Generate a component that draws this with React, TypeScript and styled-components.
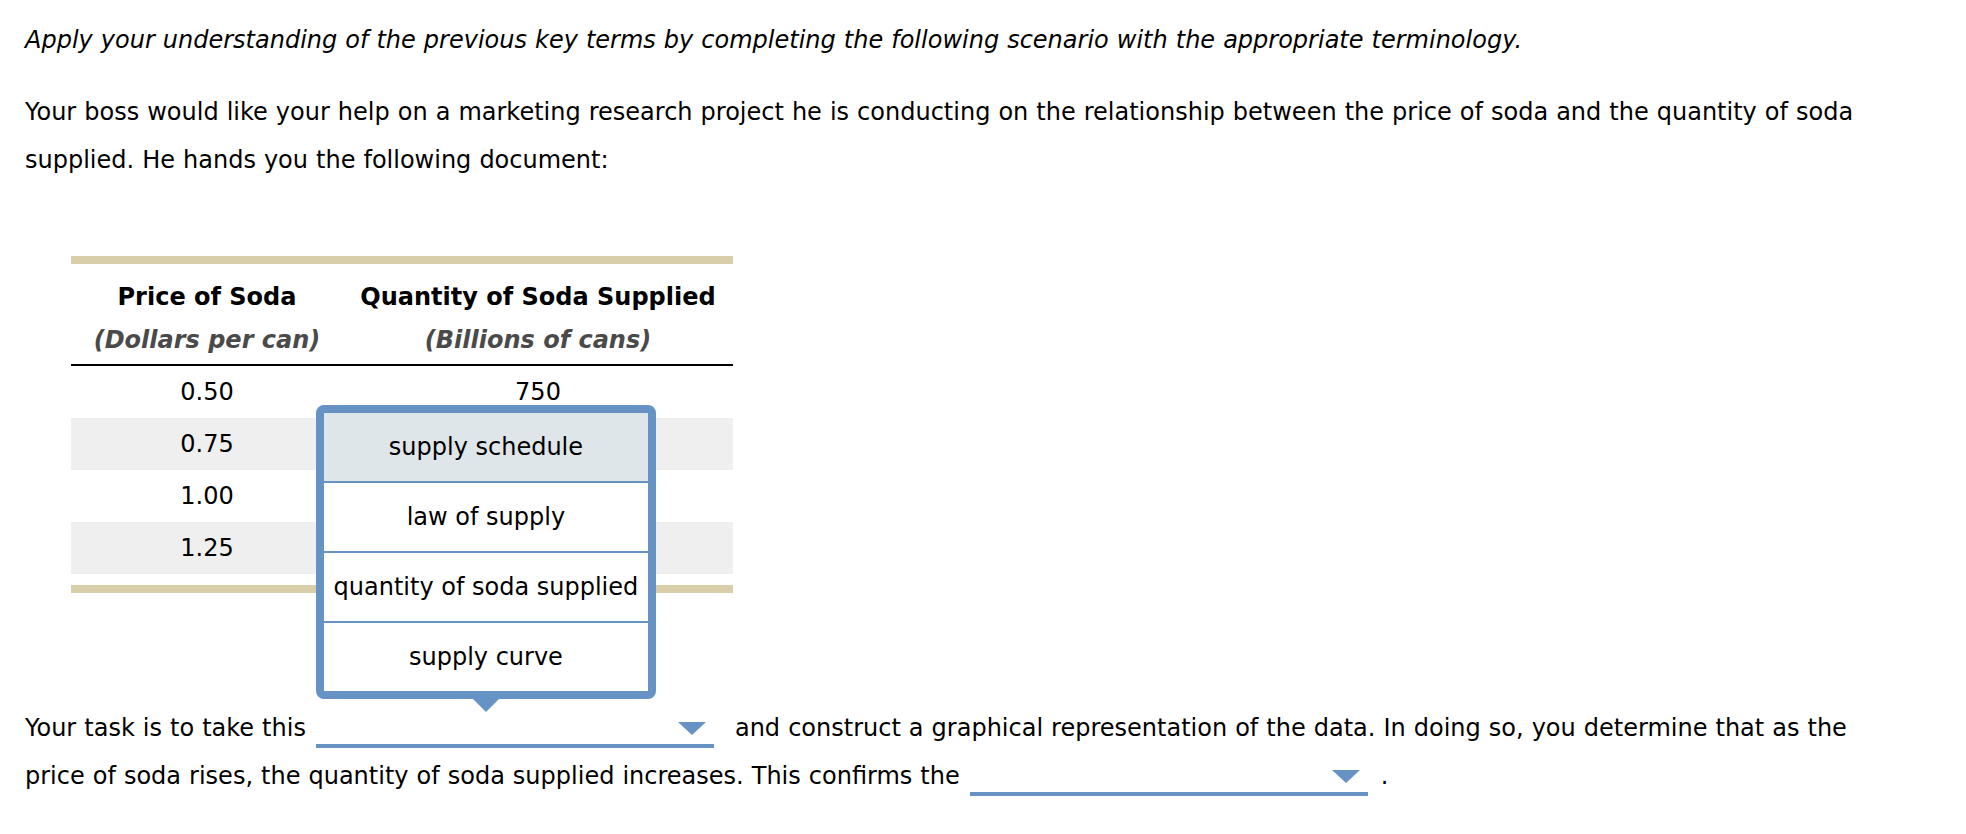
import { ReactNode } from 'react';
import styled, { createGlobalStyle } from 'styled-components';

const BLUE = '#6693c3';
const TAN = '#d8cea9';

const GlobalStyle = createGlobalStyle`
  body {
    margin: 0;
    background: #fff;
    color: #000;
    font-family: Verdana, 'DejaVu Sans', sans-serif;
  }
`;

interface Row {
  price: string;
  quantity: string;
}

const rows: Row[] = [
  { price: '0.50', quantity: '750' },
  { price: '0.75', quantity: '' },
  { price: '1.00', quantity: '' },
  { price: '1.25', quantity: '' },
];

const options = ['supply schedule', 'law of supply', 'quantity of soda supplied', 'supply curve'];

const Arrow = () => (
  <ArrowIcon width="28" height="13" viewBox="0 0 28 13">
    <polygon points="0,0 28,0 14,13" fill={BLUE} />
  </ArrowIcon>
);

const Select = (props: { children?: ReactNode }) => {
  const { children } = props;
  return (
    <SelectBox>
      <Arrow />
      {children}
    </SelectBox>
  );
};

const App = () => {
  return (
    <Page>
      <GlobalStyle />
      <Intro>
        Apply your understanding of the previous key terms by completing the following scenario with the appropriate
        terminology.
      </Intro>
      <Text $gap={24}>
        Your boss would like your help on a marketing research project he is conducting on the relationship between the
        price of soda and the quantity of soda
        <br />
        supplied. He hands you the following document:
      </Text>

      <TableFrame>
        <DataTable>
          <thead>
            <tr>
              <HeadCell $w={272}>
                Price of Soda
                <SubHead>(Dollars per can)</SubHead>
              </HeadCell>
              <HeadCell $w={390}>
                Quantity of Soda Supplied
                <SubHead>(Billions of cans)</SubHead>
              </HeadCell>
            </tr>
          </thead>
          <tbody>
            {rows.map((row, idx) => (
              <BodyRow key={row.price} $shaded={idx % 2 === 1}>
                <Cell>{row.price}</Cell>
                <Cell>{row.quantity}</Cell>
              </BodyRow>
            ))}
          </tbody>
        </DataTable>
      </TableFrame>

      <Text $gap={111}>
        Your task is to take this{' '}
        <Select>
          <Popup>
            {options.map((opt, idx) => (
              <Option key={opt} $active={idx === 0}>
                {opt}
              </Option>
            ))}
          </Popup>
        </Select>{' '}
        and construct a graphical representation of the data. In doing so, you determine that as the
        <br />
        price of soda rises, the quantity of soda supplied increases. This confirms the <Select />.
      </Text>
    </Page>
  );
};

const Page = styled.div`
  padding: 16px 0 40px 25px;
  font-size: 24px;
  line-height: 48px;
  word-spacing: 0.4px;
`;

const Intro = styled.p`
  margin: 0;
  font-style: italic;
  white-space: nowrap;
`;

const Text = styled.p<{ $gap: number }>`
  margin: ${({ $gap }) => $gap}px 0 0;
  white-space: nowrap;
`;

const TableFrame = styled.div`
  width: 662px;
  margin: 72px 0 0 46px;
  padding-bottom: 11px;
  border-top: 8px solid ${TAN};
  border-bottom: 8px solid ${TAN};
  word-spacing: 0;
`;

const DataTable = styled.table`
  width: 100%;
  border-collapse: collapse;
  table-layout: fixed;
  font-size: 24px;
`;

const HeadCell = styled.th<{ $w: number }>`
  width: ${({ $w }) => $w}px;
  padding: 12px 0 2px;
  border-bottom: 2px solid #000;
  line-height: 43px;
  font-weight: bold;
  text-align: center;
  vertical-align: top;
`;

const SubHead = styled.div`
  font-style: italic;
  color: #4a4a4a;
`;

const BodyRow = styled.tr<{ $shaded: boolean }>`
  background: ${({ $shaded }) => ($shaded ? '#efefef' : '#fff')};
`;

const Cell = styled.td`
  height: 52px;
  padding: 0;
  line-height: 52px;
  text-align: center;
  vertical-align: middle;
`;

const SelectBox = styled.span`
  position: relative;
  display: inline-block;
  box-sizing: border-box;
  width: 398px;
  margin: 0 13px 0 2px;
  padding: 0 8px 9px 0;
  border-bottom: 4px solid ${BLUE};
  line-height: 0;
  vertical-align: -12px;
  word-spacing: 0;
`;

const ArrowIcon = styled.svg`
  display: block;
  margin-left: auto;
`;

const Popup = styled.ul`
  position: absolute;
  left: 0;
  bottom: calc(100% + 23px);
  z-index: 2;
  box-sizing: border-box;
  width: 340px;
  margin: 0;
  padding: 0;
  list-style: none;
  background: #fff;
  border: 8px solid ${BLUE};
  border-radius: 8px;
  line-height: normal;

  &::after {
    content: '';
    position: absolute;
    left: 50%;
    top: calc(100% + 7px);
    margin-left: -14px;
    border-left: 14px solid transparent;
    border-right: 14px solid transparent;
    border-top: 14px solid ${BLUE};
  }
`;

const Option = styled.li<{ $active?: boolean }>`
  display: flex;
  align-items: center;
  justify-content: center;
  height: 68px;
  white-space: nowrap;
  background: ${({ $active }) => ($active ? '#dfe6e9' : '#fff')};

  & + & {
    border-top: 2px solid ${BLUE};
  }
`;

export default App;
